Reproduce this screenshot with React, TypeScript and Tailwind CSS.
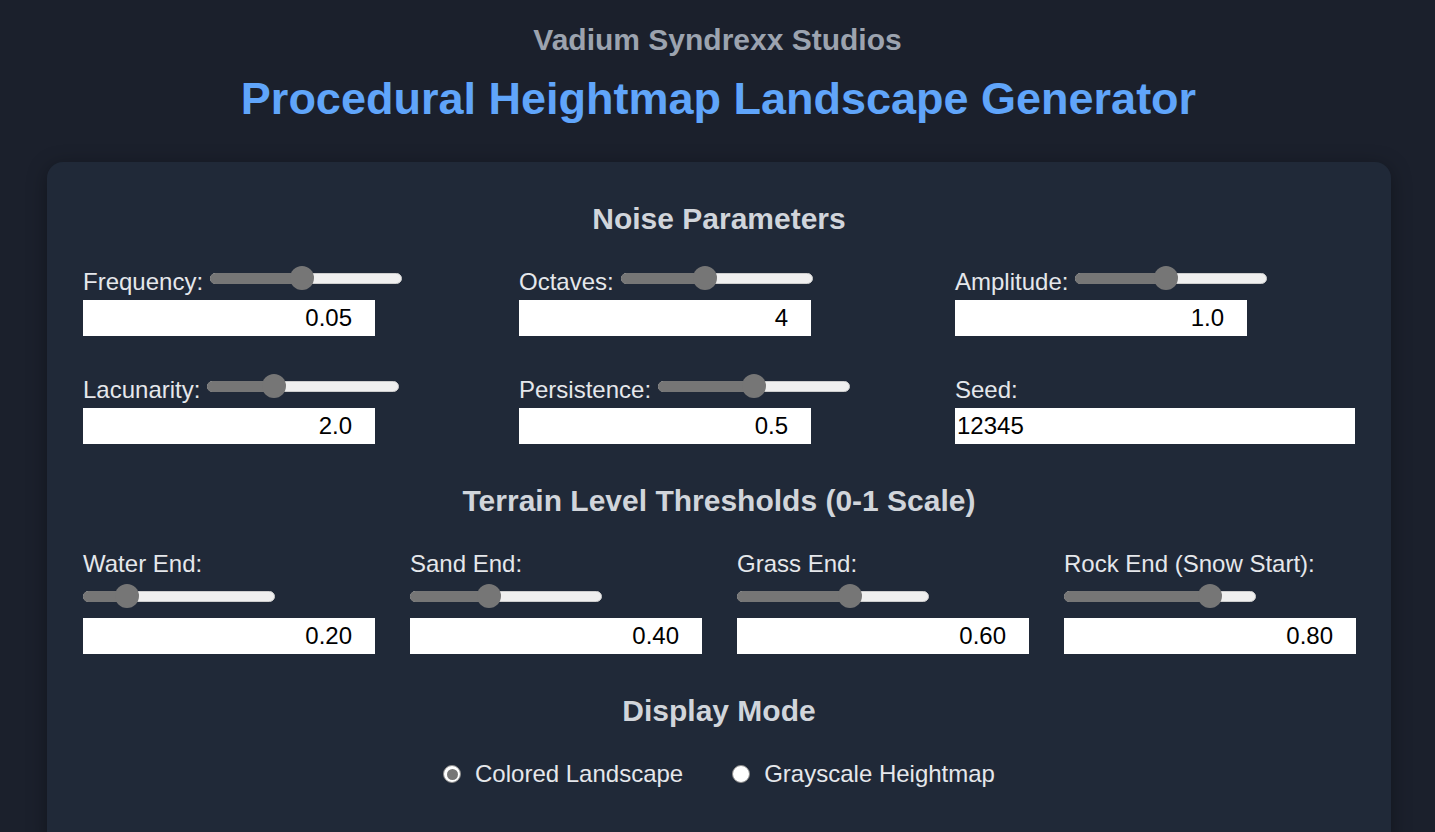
import React from "react";

const font = { fontFamily: '"Liberation Sans", Arial, Helvetica, sans-serif' };

function Slider({ frac }: { frac: number }) {
  const left = frac * (192 - 24);
  return (
    <div className="relative h-[24px] w-[192px] shrink-0">
      <div className="absolute left-0 right-0 top-[6.5px] h-[11px] rounded-full border border-[#cdcdcd] bg-[#efefef]" />
      <div
        className="absolute left-0 top-[6.5px] h-[11px] rounded-l-full bg-[#767676]"
        style={{ width: left + 12 }}
      />
      <div
        className="absolute top-0 h-[24px] w-[24px] rounded-full bg-[#767676]"
        style={{ left }}
      />
    </div>
  );
}

function InlineField({
  label,
  frac,
  value,
}: {
  label: string;
  frac?: number;
  value: string;
}) {
  return (
    <div className="flex flex-col">
      <div className="flex h-[31px] items-start gap-[7px]">
        <span className="mt-[2px] text-[24px] leading-[28px] text-[#e5e7eb]">{label}</span>
        {frac !== undefined && <Slider frac={frac} />}
      </div>
      {frac !== undefined ? (
        <div className="mt-[3px] flex h-[36px] w-[292px] items-center justify-end bg-white pr-[23px] text-[24px] text-black">
          {value}
        </div>
      ) : (
        <div className="mt-[3px] flex h-[36px] w-[400px] items-center bg-white pl-[2px] text-[24px] text-black">
          {value}
        </div>
      )}
    </div>
  );
}

function StackField({ label, frac, value }: { label: string; frac: number; value: string }) {
  return (
    <div className="flex flex-col">
      <span className="text-[24px] leading-[28px] text-[#e5e7eb]">{label}</span>
      <div className="mt-[6px]">
        <Slider frac={frac} />
      </div>
      <div className="mt-[10px] flex h-[36px] w-[292px] items-center justify-end bg-white pr-[23px] text-[24px] text-black">
        {value}
      </div>
    </div>
  );
}

function Radio({ checked, label }: { checked: boolean; label: string }) {
  return (
    <div className="flex items-center gap-[14px]">
      {checked ? (
        <div className="flex h-[18px] w-[18px] items-center justify-center rounded-full border-[1.5px] border-[#8a8a8a] bg-white">
          <div className="h-[11px] w-[11px] rounded-full bg-[#767676]" />
        </div>
      ) : (
        <div className="h-[18px] w-[18px] rounded-full border-[1.5px] border-[#8a8a8a] bg-white" />
      )}
      <span className="text-[24px] leading-[28px] text-[#e5e7eb]">{label}</span>
    </div>
  );
}

export default function App() {
  return (
    <div className="min-h-screen bg-[#1b202c] pt-[22px]" style={font}>
      <div className="text-center text-[30px] font-bold leading-[36px] text-[#9ca3af]">
        Vadium Syndrexx Studios
      </div>
      <h1 className="ml-[2px] mt-[14px] text-center text-[45px] font-bold leading-[54px] text-[#60a5fa]">
        Procedural Heightmap Landscape Generator
      </h1>
      <div className="ml-[47px] mt-[36px] w-[1344px] rounded-[16px] bg-[#202938] px-[36px] pb-[60px] pt-[39px] shadow-[0_4px_20px_rgba(0,0,0,0.35)]">
        <h2 className="text-center text-[30px] font-bold leading-[36px] text-[#d1d5db]">
          Noise Parameters
        </h2>
        <div className="mt-[29px] grid grid-cols-3 gap-x-[36px] gap-y-[38px]">
          <InlineField label="Frequency:" frac={0.476} value="0.05" />
          <InlineField label="Octaves:" frac={0.43} value="4" />
          <InlineField label="Amplitude:" frac={0.47} value="1.0" />
          <InlineField label="Lacunarity:" frac={0.327} value="2.0" />
          <InlineField label="Persistence:" frac={0.5} value="0.5" />
          <InlineField label="Seed:" value="12345" />
        </div>
        <h2 className="mt-[39px] text-center text-[30px] font-bold leading-[36px] text-[#d1d5db]">
          Terrain Level Thresholds (0-1 Scale)
        </h2>
        <div className="mt-[31px] grid grid-cols-4 gap-x-[36px]">
          <StackField label="Water End:" frac={0.19} value="0.20" />
          <StackField label="Sand End:" frac={0.4} value="0.40" />
          <StackField label="Grass End:" frac={0.6} value="0.60" />
          <StackField label="Rock End (Snow Start):" frac={0.8} value="0.80" />
        </div>
        <h2 className="mt-[39px] text-center text-[30px] font-bold leading-[36px] text-[#d1d5db]">
          Display Mode
        </h2>
        <div className="mt-[31px] flex justify-center gap-[49px]">
          <Radio checked label="Colored Landscape" />
          <Radio checked={false} label="Grayscale Heightmap" />
        </div>
      </div>
    </div>
  );
}
